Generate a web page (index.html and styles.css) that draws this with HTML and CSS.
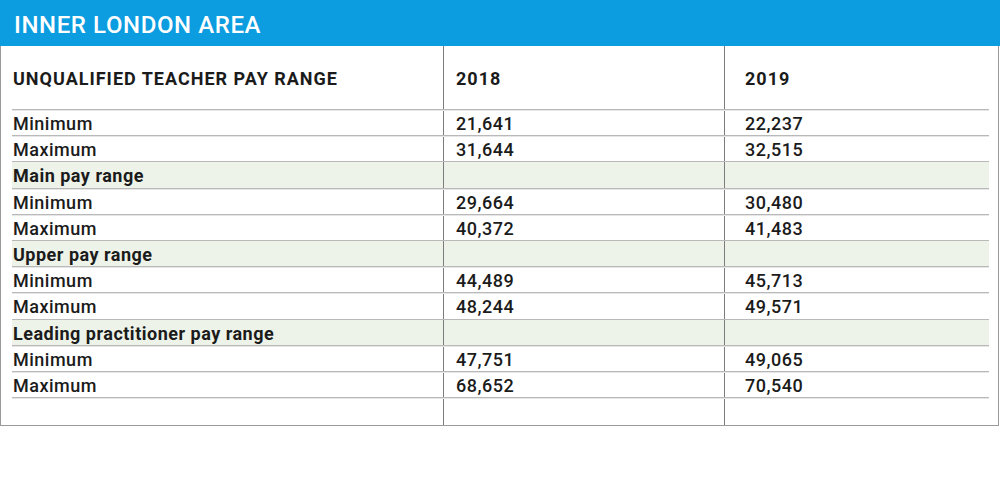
FILE: index.html
```html
<!DOCTYPE html>
<html lang="en">
<head>
<meta charset="utf-8">
<title>Inner London Area</title>
<link rel="stylesheet" href="styles.css">
</head>
<body>
<div class="panel">
  <div class="title-bar"><h1 class="title">INNER LONDON AREA</h1></div>
  <div class="table-wrap">
    <div class="row head">
      <div class="cell c1">UNQUALIFIED TEACHER PAY RANGE</div>
      <div class="cell c2">2018</div>
      <div class="cell c3">2019</div>
    </div>
    <div class="row"><div class="cell c1">Minimum</div><div class="cell c2">21,641</div><div class="cell c3">22,237</div></div>
    <div class="row"><div class="cell c1">Maximum</div><div class="cell c2">31,644</div><div class="cell c3">32,515</div></div>
    <div class="row section"><div class="cell c1">Main pay range</div><div class="cell c2"></div><div class="cell c3"></div></div>
    <div class="row"><div class="cell c1">Minimum</div><div class="cell c2">29,664</div><div class="cell c3">30,480</div></div>
    <div class="row"><div class="cell c1">Maximum</div><div class="cell c2">40,372</div><div class="cell c3">41,483</div></div>
    <div class="row section"><div class="cell c1">Upper pay range</div><div class="cell c2"></div><div class="cell c3"></div></div>
    <div class="row"><div class="cell c1">Minimum</div><div class="cell c2">44,489</div><div class="cell c3">45,713</div></div>
    <div class="row"><div class="cell c1">Maximum</div><div class="cell c2">48,244</div><div class="cell c3">49,571</div></div>
    <div class="row section"><div class="cell c1">Leading practitioner pay range</div><div class="cell c2"></div><div class="cell c3"></div></div>
    <div class="row"><div class="cell c1">Minimum</div><div class="cell c2">47,751</div><div class="cell c3">49,065</div></div>
    <div class="row"><div class="cell c1">Maximum</div><div class="cell c2">68,652</div><div class="cell c3">70,540</div></div>
  </div>
</div>
</body>
</html>
```
FILE: styles.css
```css
html, body {
  margin: 0;
  padding: 0;
  background: #ffffff;
}
body {
  font-family: Roboto, "Liberation Sans", sans-serif;
  color: #1b1b1b;
}
.panel {
  width: 1000px;
}
.title-bar {
  height: 46px;
  background: #0c9ce0;
  display: flex;
  align-items: center;
  padding-left: 14px;
  box-sizing: border-box;
}
.title {
  margin: 0;
  font-size: 24px;
  font-weight: 500;
  color: #ffffff;
  letter-spacing: 0.6px;
  line-height: 1;
  padding-top: 3px;
}
.table-wrap {
  width: 999px;
  height: 380px;
  box-sizing: border-box;
  border: 1px solid #9a9a9a;
  border-top: none;
  padding: 0 9px 0 11px;
  background:
    linear-gradient(#7d7d7d, #7d7d7d) 442px 0 / 1px 100% no-repeat,
    linear-gradient(#7d7d7d, #7d7d7d) 723px 0 / 1px 100% no-repeat,
    #ffffff;
}
.row {
  display: grid;
  grid-template-columns: 431px 281px 1fr;
  height: 26.2px;
  box-sizing: border-box;
  border-bottom: 1px solid #b9b9b9;
  box-shadow: 0 1px 0 #e6e6e6;
  align-items: center;
  font-size: 18px;
  font-weight: 500;
  letter-spacing: 0.5px;
}
.row.head {
  height: 64px;
  font-weight: 700;
  font-size: 18px;
  letter-spacing: 1px;
}
.row.section {
  font-weight: 700;
  background:
    linear-gradient(#7d7d7d, #7d7d7d) 431px 0 / 1px 100% no-repeat,
    linear-gradient(#7d7d7d, #7d7d7d) 712px 0 / 1px 100% no-repeat,
    #eef3e9;
}
.cell {
  line-height: 1;
  padding-top: 3px;
  white-space: nowrap;
}
.head .cell {
  padding-top: 2px;
}
.c1 { padding-left: 1px; }
.c2 { padding-left: 13px; }
.c3 { padding-left: 21px; }
```
